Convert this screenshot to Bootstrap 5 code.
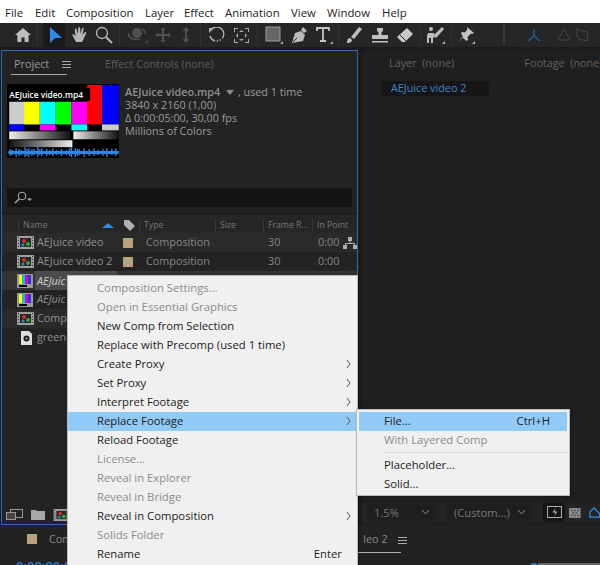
<!DOCTYPE html>
<html lang="en"><head><meta charset="utf-8"><title>After Effects</title>
<link href="https://cdn.jsdelivr.net/npm/bootstrap@5.3.0/dist/css/bootstrap.min.css" rel="stylesheet">
<style>
html,body{margin:0;height:565px;overflow:hidden;background:#1b1b1b;}
body{width:600px;position:relative;font-family:"Open Sans","Noto Sans","Liberation Sans",sans-serif;font-size:10.8px;color:#8d8d8d;line-height:1;}
.app-menubar{height:23px;background:#fff;color:#222;font-size:11.4px;padding:7px 0 0 5px;}
.app-menubar span{flex:none;}
.w30{width:30px}.w31{width:31px}.w79{width:79px}.w39{width:39px}.w41{width:41px}.w66{width:66px}.w36{width:36px}.w55{width:55px}
.app-toolbar{height:24px;background:#262626;padding-left:14px;}
.app-toolbar svg{display:block;flex:none;}
.tool-sep{width:1px;height:20px;background:#333;flex:none;}
.tool-sep.wide{width:2px;background:#3a3a3a;}
.arrow-box{width:22px;height:24px;background:#1a1a1a;padding:3px 0 0 6px;flex:none;}
.m0{margin-left:0}.m4{margin-left:4px}.m5{margin-left:5px}.m6{margin-left:6px}.m7{margin-left:7px}.m8{margin-left:8px}.m12{margin-left:12px}.m20{margin-left:20px}.m28{margin-left:28px}
.app-main{height:478px;padding:3px 0 0 1px;}
.proj-panel{width:357px;border:1px solid #2a6db5;background:#232323;flex:none;}
.panel-tabs{height:29px;padding-left:9px;color:#5e5e5e;flex:none;}
.tab-on{color:#9a9a9a;border-bottom:1px solid #a8a8a8;width:56px;height:24px;padding:8px 0 0 3px;display:flex;gap:13px;}
.tab-off{padding:8px 0 0 38px;height:24px;}
.burger{display:block;width:9px;height:7px;border-top:1px solid #aaa;border-bottom:1px solid #aaa;position:relative;margin-top:2px;flex:none;}
.burger::after{content:"";position:absolute;left:0;right:0;top:2px;height:1px;background:#aaa;}
.info-row{height:79px;padding:4px 0 0 5px;gap:6px;flex:none;}
.info-row>svg{flex:none;}
.info-text{color:#9c9c9c;font-size:10.8px;line-height:13px;padding-top:1px;white-space:nowrap;}
.info-text b{font-weight:600;color:#8f8f8f;}
.info-caret{margin:0 4px 1px 3px;}
.search-box{height:19px;margin:29px 5px 0 5px;background:#141414;padding:3px 0 0 7px;flex:none;}
.search-box svg{display:block;}
.list-head{height:20px;margin-top:6px;padding-top:4px;background:#262626;border-top:1px solid #161616;color:#777;font-size:8.7px;display:grid;grid-template-columns:100px 21px 76px 48px 49px 40px;padding-left:21px;align-items:center;flex:none;}
.hcell{position:relative;white-space:nowrap;}
.hcell::before{content:"";position:absolute;left:-5px;top:-2px;width:1px;height:12px;background:#363636;}
.hname{display:flex;justify-content:space-between;align-items:center;padding-right:9px;}
.file-row{height:19px;font-size:10.8px;color:#868686;display:grid;grid-template-columns:20px 86px 23px 122px 50px 25px 14px;padding-left:15px;align-items:center;white-space:nowrap;flex:none;}
.file-row.alt{background:#2a2a2a;}
.file-row.sel{background:#333;}
.nm{color:#8f8f8f;}
.nm-sel{background:#4b4b4b;margin-left:-2px;padding-left:2px;height:19px;line-height:19px;width:82px;color:#cfcfcf;}
.swatch{display:block;width:10px;height:10px;background:#b6a47f;}
.swatch.teal{background:#a9c7cb;}
.list-foot{height:15px;padding:0 0 0 4px;flex:none;}
.list-foot svg{flex:none;}
.right-panel{flex:1;min-width:0;margin-left:4px;background:#1f1f1f;}
.right-tabs{color:#626262;padding:8px 0 0 27px;height:31px;white-space:nowrap;flex:none;gap:70px;}
.comp-tab{width:107px;height:15px;background:#161616;margin-left:20px;color:#3f86cc;padding:2px 0 0 9px;flex:none;}
.view-ctrl{height:19px;background:#242424;margin-bottom:3px;padding-left:5px;flex:none;}
.dd{height:17px;background:#1f1f1f;color:#777;font-size:11.2px;padding:0 6px 0 7px;flex:none;}
.dd1{width:69px}.dd2{width:85px;margin-left:11px;}
.spark-box{width:22px;height:19px;margin-left:11px;background:#161616;padding:3px 0 0 4px;flex:none;}
.bottom-strip{height:40px;background:#222;flex:none;}
.strip-top{height:28px;padding-left:27px;position:relative;color:#8a8a8a;}
.b-swatch{display:block;width:10px;height:10px;background:#b6a47f;flex:none;}
.b-com{margin-left:12px;}
.b-leo{margin-left:291px;}
.b-burger{margin:2px 0 0 10px;}
.b-line{position:absolute;left:357px;top:27px;width:44px;height:1px;background:#b0b0b0;}
.strip-low{padding:7px 0 0 16px;}
.b-time{color:#2c7fd6;font-size:13px;font-weight:600;}
.b-dot{display:block;width:8px;height:8px;border-radius:50%;background:#2c7fd6;margin-left:auto;margin-top:3px;}
.b-bar{display:block;width:62px;height:6px;background:#666;margin-top:3px;}
.ctx-menu{position:absolute;background:#f0f0f0;box-shadow:0 0 0 1px #bbb,1px 1px 3px rgba(0,0,0,.5);color:#1c1c1c;font-size:11.3px;}
.ctx-main{left:68px;top:276px;width:289px;height:300px;padding-top:3px;}
.ctx-sub{left:357px;top:410px;width:212px;height:85px;padding:2px 2px 0 2px;}
.ctx-item{height:19px;padding:0 6px 2px 29px;white-space:nowrap;display:flex;align-items:center;justify-content:space-between;}
.ctx-item.off{color:#8b8b8b;}
.ctx-item.hot{background:#91c9f7;}
.ctx-sub .ctx-item{padding-left:25px;padding-right:17px;}
.ctx-main .ctx-key{margin-right:9px;}
.ctx-rule{height:1px;background:#d7d7d7;margin:2px 0 3px 25px;}
</style></head>
<body>
<svg width="0" height="0" class="d-block position-absolute">
<symbol id="ico-comp" viewBox="0 0 17 13"><rect width="17" height="13" fill="#a0a0a0"/><path d="M1 1h1v1H1zM1 4h1v1H1zM1 7h1v1H1zM1 10h1v1H1zM15 1h1v1h-1zM15 4h1v1h-1zM15 7h1v1h-1zM15 10h1v1h-1z" fill="#333"/><rect x="3" y="2" width="11" height="9" fill="#262626"/><circle cx="7" cy="5" r="2" fill="#c33"/><circle cx="11" cy="8" r="2" fill="#3a3"/><circle cx="6" cy="9" r="1.500" fill="#38c"/></symbol>
<symbol id="ico-foot" viewBox="0 0 16 14"><rect width="16" height="14" fill="#999"/><rect x="2" y="1" width="3" height="9" fill="#ff0"/><rect x="5" y="1" width="3" height="9" fill="#0cc"/><rect x="8" y="1" width="3" height="9" fill="#d0d"/><rect x="11" y="1" width="3" height="9" fill="#33c"/><rect x="2" y="11" width="8" height="2" fill="#000"/></symbol>
<symbol id="ico-arrow" viewBox="0 0 5 8"><path d="m1 0 3 4-3 4" fill="none" stroke="#555"/></symbol>
<symbol id="ico-chev" viewBox="0 0 9 5"><path d="m1 0 3.500 4L8 0" fill="none" stroke="#8a8a8a"/></symbol>
</svg>
<div class="app-menubar d-flex">
<span class="w30">File</span><span class="w31">Edit</span><span class="w79">Composition</span><span class="w39">Layer</span><span class="w41">Effect</span><span class="w66">Animation</span><span class="w36">View</span><span class="w55">Window</span><span>Help</span>
</div>
<div class="app-toolbar d-flex align-items-center">
<svg width="18" height="16" viewBox="0 0 18 16" fill="#bdbdbd"><path d="M9 1 1 8h2.400v7h4V10.500h3.200V15h4V8H17z"/></svg>
<div class="tool-sep m5"></div>
<div class="arrow-box m5"><svg width="14" height="18" viewBox="0 0 14 18"><path d="M1 1v16l5-5h7z" fill="#2d8ceb"/></svg></div>
<svg class="m6" width="18" height="18" viewBox="0 0 18 18" fill="#b8b8b8"><path d="M5 16 1.500 9.500c-.5-1 .8-1.800 1.500-.9L4.500 10.500 3.800 3.500c-.1-1.200 1.500-1.400 1.700-.2L6.800 8 7.300 1.800c.1-1.200 1.700-1.200 1.800 0L9.500 8l1.500-5.500c.3-1.100 1.800-.8 1.600.3L11.500 9l2.300-2.700c.8-.9 2 .1 1.400 1L12.500 13 11 16z"/></svg>
<svg class="m6" width="18" height="18" viewBox="0 0 18 18" fill="none" stroke="#b8b8b8"><circle cx="7" cy="7" r="5.500" stroke-width="1.300"/><path d="m11 11 6 6" stroke-width="2"/></svg>
<div class="tool-sep m6"></div>
<svg class="m6" width="22" height="18" viewBox="0 0 22 18" fill="none"><circle cx="11" cy="7" r="5" fill="#505050"/><path d="M3 7C1 11 8 15 14 13M19 8c1-2-1-4-3-5" stroke="#505050" stroke-width="1.500"/><path d="M19 17h3v-3z" fill="#505050"/></svg>
<svg class="m5" width="20" height="18" viewBox="0 0 20 18" fill="#505050"><path d="M10 1 7.500 4H9v4H5V6.500L2 9l3 2.500V10h4v4H7.500L10 17l2.500-3H11v-4h4v1.500L18 9l-3-2.500V8h-4V4h1.500z"/></svg>
<svg class="m7" width="12" height="18" viewBox="0 0 12 18" fill="#505050"><path d="M6 1 2.500 5H5v8H2.500L6 17l3.500-4H7V5h2.500z"/></svg>
<div class="tool-sep m8"></div>
<svg class="m7" width="17" height="17" viewBox="0 0 17 17" fill="none" stroke="#b0b0b0"><path d="M3 3a7 7 0 1 1-1 6" stroke-width="1.500" stroke-dasharray="22 2 1.500 1.500 1.500 1.500"/><path d="M1 6V1h5z" fill="#b0b0b0" stroke="none"/></svg>
<svg class="m8" width="17" height="17" viewBox="0 0 17 17" fill="#aaa"><path d="M1 1h4v1H2v3H1zM12 1h4v4h-1V2h-3zM1 12h1v3h3v1H1zM15 12h1v4h-4v-1h3z"/><path d="M8.500 3 11 5H6zM8.500 14 6 12h5zM3 8.500 5 6v5zM14 8.500 12 11V6z"/></svg>
<div class="tool-sep m7"></div>
<svg class="m7" width="18" height="18" viewBox="0 0 18 18"><rect x="1" y="1" width="14" height="14" fill="#666" stroke="#9a9a9a"/><path d="M15 18h3v-3z" fill="#aaa"/></svg>
<svg class="m7" width="18" height="18" viewBox="0 0 18 18" fill="#bbb"><path d="M2 17 5 7l6-2 4 4-2 6zM11 4l2-3 4 4-3 2z"/><path d="m3 16 4-4" stroke="#262626"/></svg>
<svg class="m7" width="18" height="18" viewBox="0 0 18 18"><path d="M2 5V2h12v3M8 2v13M5 15h6" fill="none" stroke="#c4c4c4" stroke-width="1.800"/><path d="M15 18h3v-3z" fill="#aaa"/></svg>
<div class="tool-sep m5"></div>
<svg class="m7" width="17" height="18" viewBox="0 0 17 18" fill="#c0c0c0"><path d="M1 17c0-3 1-5 3-5l2 2c0 2-2 3-5 3zM5 11 13 1l3 2-8 10z"/></svg>
<svg class="m8" width="18" height="16" viewBox="0 0 18 16" fill="#c0c0c0"><path d="M6 1h6v3l-1.500 1v3H17v4H1V8h6.500V5L6 4zM1 14h16v1.500H1z"/></svg>
<svg class="m7" width="18" height="17" viewBox="0 0 18 17" fill="#c8c8c8"><path d="M11 1l6 6-8 8H6L1 10z"/><path d="M4 8l6 6" stroke="#262626"/></svg>
<div class="tool-sep m6"></div>
<svg class="m4" width="20" height="18" viewBox="0 0 20 18" fill="#bdbdbd"><circle cx="6" cy="3" r="2"/><path d="M3 7h6l1 4-2 1v5H6v-5H4v5H2V10z"/><path d="m9 9 8-8 2 2-8 9zM17 18h3v-3z"/></svg>
<div class="tool-sep m6"></div>
<svg class="m6" width="17" height="18" viewBox="0 0 17 18" fill="#c4c4c4"><path d="m9 1 7 6-2 1-1-.5-3.500 3.500.5 3-1.500 1L4 11l-3 5 4-5-2-4 1-1 3 .5L9.500 3 9 2zM14 18h3v-3z"/></svg>
<div class="tool-sep wide m28"></div>
<svg class="m20" width="18" height="18" viewBox="0 0 18 18" fill="none" stroke="#1f5f9f" stroke-width="1.500"><path d="M9 3v7M9 10l-6 5M9 10l6 5"/></svg>
<svg class="m12" width="18" height="18" viewBox="0 0 18 18" fill="none" stroke="#444"><path d="M9 3 3 14h12z"/></svg>
<svg class="m0" width="18" height="18" viewBox="0 0 18 18" fill="none" stroke="#444"><path d="M3 3 14 6 15 15 5 13z"/></svg>
</div>
<div class="app-main d-flex">
<div class="proj-panel d-flex flex-column">
<div class="panel-tabs d-flex"><div class="tab-on">Project <span class="burger"></span></div><div class="tab-off">Effect Controls (none)</div></div>
<div class="info-row d-flex">
<svg width="112" height="74" viewBox="0 0 113 75"><rect width="113" height="75" fill="#000"/>
<rect x="2" y="18" width="15" height="23" fill="#ccc"/><rect x="17" y="18" width="16" height="23" fill="#ff0"/><rect x="33" y="18" width="16" height="23" fill="#0ff"/><rect x="49" y="18" width="16" height="23" fill="#0f0"/><rect x="65" y="18" width="16" height="23" fill="#f0f"/><rect x="81" y="1" width="15" height="40" fill="#f00"/><rect x="96" y="1" width="17" height="40" fill="#00f"/>
<rect x="2" y="41" width="15" height="6" fill="#00f"/><rect x="33" y="41" width="16" height="6" fill="#f0f"/><rect x="65" y="41" width="16" height="6" fill="#0ff"/><rect x="96" y="41" width="17" height="6" fill="#ccc"/>
<defs><linearGradient id="gfade"><stop offset="0" stop-color="#eee"/><stop offset="1" stop-color="#111"/></linearGradient><linearGradient id="gramp"><stop offset="0" stop-color="#111"/><stop offset="1" stop-color="#eee"/></linearGradient></defs>
<rect x="2" y="48" width="62" height="8" fill="url(#gfade)"/><rect x="67" y="48" width="46" height="8" fill="url(#gfade)"/><rect x="2" y="57" width="64" height="7" fill="url(#gramp)"/>
<path d="M1 69.500h112" stroke="#2e86e6" stroke-width="3"/>
<path d="M3 66v7M5 67v5M9 65v9M12 66v7M14 67v5M18 64v10M20 66v7M22 65v9M25 66v7M27 66v6M31 64v10M33 66v6M35 65v8M40 66v7M43 67v5M46 65v8M50 67v5M55 66v7M60 67v5M63 65v8M65 64v10M69 65v9M71 66v7M73 66v6M78 65v9M83 66v7M88 65v8M92 67v5M97 66v7M101 65v9M106 66v6M110 65v8" stroke="#2e86e6" stroke-width="1.400"/>
<rect x="0" y="4" width="84" height="13" fill="#000"/><text x="2" y="14" font-size="8.500" font-weight="600" fill="#fff" font-family="Open Sans, sans-serif">AEJuice video.mp4</text></svg>
<div class="info-text"><b>AEJuice video.mp4</b> <svg class="info-caret" width="8" height="5" viewBox="0 0 8 5"><path d="M0 0h8L4 5z" fill="#8a8a8a"/></svg>, used 1 time<br>3840 x 2160 (1,00)<br>Δ 0:00:05:00, 30,00 fps<br>Millions of Colors</div>
</div>
<div class="search-box"><svg width="18" height="13" viewBox="0 0 18 13" fill="none" stroke="#b5b5b5"><circle cx="8" cy="5" r="3.800"/><path d="M5 8 1 12" stroke-width="1.300"/><path d="M13 7.500h5l-2.500 2.500z" fill="#b5b5b5" stroke="none"/></svg></div>
<div class="list-head">
<span class="hcell hname">Name<svg width="12" height="5" viewBox="0 0 12 5"><path d="M0 5 6 0l6 5z" fill="#2d8ceb"/></svg></span>
<svg width="13" height="13" viewBox="0 0 13 13"><path d="M1 1h5l6 6-5 5-6-6z" fill="#b0b0b0"/></svg>
<span class="hcell">Type</span><span class="hcell">Size</span><span class="hcell">Frame R...</span><span class="hcell">In Point</span>
</div>
<div class="file-row alt"><svg width="17" height="13"><use href="#ico-comp"/></svg><span class="nm">AEJuice video</span><i class="swatch"></i><span>Composition</span><span>30</span><span>0:00</span><svg width="14" height="12" viewBox="0 0 14 12" fill="#b0b0b0"><rect x="5" width="4" height="4"/><rect y="8" width="4" height="4"/><rect x="10" y="8" width="4" height="4"/><path d="M6.500 4h1v2H12v2h-1V7H3v1H2V6h4.500z"/></svg></div>
<div class="file-row"><svg width="17" height="13"><use href="#ico-comp"/></svg><span class="nm">AEJuice video 2</span><i class="swatch"></i><span>Composition</span><span>30</span><span>0:00</span></div>
<div class="file-row sel"><svg width="16" height="14"><use href="#ico-foot"/></svg><span class="nm-sel fst-italic">AEJuic</span><i class="swatch teal"></i></div>
<div class="file-row"><svg width="16" height="14"><use href="#ico-foot"/></svg><span class="nm fst-italic">AEJuic</span></div>
<div class="file-row alt"><svg width="17" height="13"><use href="#ico-comp"/></svg><span class="nm">Comp</span></div>
<div class="file-row"><svg width="11" height="14" viewBox="0 0 11 14" class="m4"><path d="M0 0h8l3 3v11H0z" fill="#ddd"/><circle cx="5.500" cy="7.500" r="3" fill="#222"/><circle cx="5.500" cy="7.500" r="1" fill="#c9b"/></svg><span class="nm">green-</span></div>
<div class="list-foot d-flex mt-auto"><svg width="17" height="11" viewBox="0 0 17 11" fill="none" stroke="#9a9a9a"><rect x="4.500" y=".5" width="12" height="8"/><rect x=".5" y="3.500" width="9" height="7" fill="#444"/></svg><svg class="m8" width="14" height="11" viewBox="0 0 14 11" fill="#a8a8a8"><path d="M0 1h5l1 1h8v9H0z"/></svg><svg class="m8" width="17" height="12"><use href="#ico-comp"/></svg></div>
</div>
<div class="right-panel d-flex flex-column">
<div class="right-tabs d-flex"><span>Layer&nbsp; (none)</span><span>Footage&nbsp; (none)</span></div>
<div class="comp-tab">AEJuice video 2</div>
<div class="view-ctrl d-flex align-items-center mt-auto">
<div class="dd dd1 d-flex align-items-center justify-content-between">1.5%<svg width="9" height="5"><use href="#ico-chev"/></svg></div>
<div class="dd dd2 d-flex align-items-center justify-content-between">(Custom...)<svg width="9" height="5"><use href="#ico-chev"/></svg></div>
<div class="spark-box"><svg class="d-block" width="15" height="12" viewBox="0 0 16 13" fill="none" stroke="#bbb"><rect x=".5" y=".5" width="15" height="12"/><path d="M9 2 6 7h3l-1 4 3-5H8z" fill="#bbb" stroke="none"/></svg></div>
<svg class="m4" width="14" height="12" viewBox="0 0 14 12"><rect width="14" height="12" fill="#8f8f8f"/><path d="M2 2h2v2H2zM6 2h2v2H6zM10 2h2v2h-2zM4 5h2v2H4zM8 5h2v2H8zM2 8h2v2H2zM6 8h2v2H6zM10 8h2v2h-2z" fill="#444"/></svg>
<svg class="m8" width="14" height="13" viewBox="0 0 14 13" fill="none" stroke="#2d8ceb" stroke-width="1.500"><path d="M1 12V6l5-5 7 7v4z"/></svg>
</div>
</div>
</div>
<div class="bottom-strip">
<div class="strip-top d-flex align-items-center"><i class="b-swatch"></i><span class="b-com">Com</span><span class="b-leo">leo 2</span><span class="burger b-burger"></span><div class="b-line"></div></div>
<div class="strip-low d-flex"><span class="b-time">0:00:00:00</span><i class="b-dot"></i><i class="b-bar"></i></div>
</div>
<div class="ctx-menu ctx-main">
<div class="ctx-item off">Composition Settings...</div>
<div class="ctx-item off">Open in Essential Graphics</div>
<div class="ctx-item">New Comp from Selection</div>
<div class="ctx-item">Replace with Precomp (used 1 time)</div>
<div class="ctx-item">Create Proxy<svg width="5" height="8"><use href="#ico-arrow"/></svg></div>
<div class="ctx-item">Set Proxy<svg width="5" height="8"><use href="#ico-arrow"/></svg></div>
<div class="ctx-item">Interpret Footage<svg width="5" height="8"><use href="#ico-arrow"/></svg></div>
<div class="ctx-item hot">Replace Footage<svg width="5" height="8"><use href="#ico-arrow"/></svg></div>
<div class="ctx-item">Reload Footage</div>
<div class="ctx-item off">License...</div>
<div class="ctx-item off">Reveal in Explorer</div>
<div class="ctx-item off">Reveal in Bridge</div>
<div class="ctx-item">Reveal in Composition<svg width="5" height="8"><use href="#ico-arrow"/></svg></div>
<div class="ctx-item off">Solids Folder</div>
<div class="ctx-item">Rename<span class="ctx-key">Enter</span></div>
</div>
<div class="ctx-menu ctx-sub">
<div class="ctx-item hot">File...<span>Ctrl+H</span></div>
<div class="ctx-item off">With Layered Comp</div>
<div class="ctx-rule"></div>
<div class="ctx-item">Placeholder...</div>
<div class="ctx-item">Solid...</div>
</div>
</body></html>
